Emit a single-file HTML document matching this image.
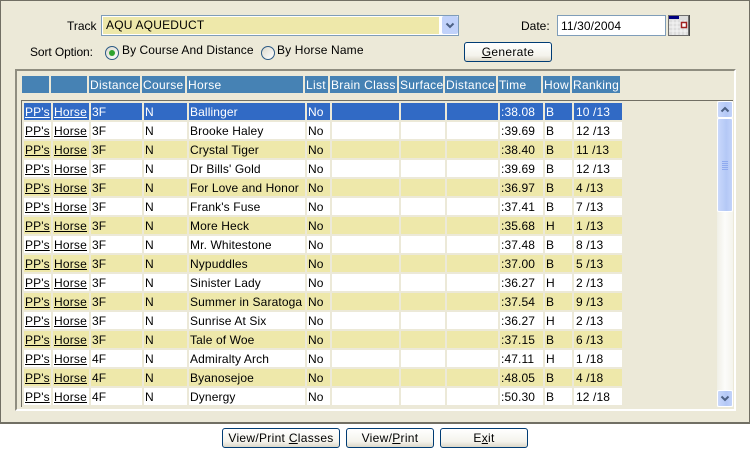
<!DOCTYPE html>
<html><head><meta charset="utf-8">
<style>
html,body{margin:0;padding:0;background:#fff}
#p{position:relative;width:750px;height:460px;overflow:hidden;background:#fff;font:12px "Liberation Sans",sans-serif;color:#000;letter-spacing:.1px}
.a{position:absolute;white-space:nowrap}
.panel{left:0;top:0;width:748px;height:421px;background:#ECE9D8;border:1px solid #716F64;border-width:1px 1px 2px 1px}
.r,.h{position:absolute;display:grid;grid-template-columns:27px 36px 51px 43px 116px 23px 67px 44px 51px 43px 27px 48px;column-gap:2px;height:17px;line-height:19px}
.r{left:24px;letter-spacing:.12px}
.h{left:22px;top:76px;color:#fff;letter-spacing:.3px}
.h div{background:#4682B4;padding-left:1px;overflow:hidden;white-space:nowrap}
.r div{background:#fff;padding-left:1px;overflow:hidden;white-space:nowrap}
.r div:nth-child(12){padding-left:2px}
.r div:nth-child(1),.r div:nth-child(2){text-decoration:underline}
.r div:nth-child(2){letter-spacing:.2px}
.y div{background:#EEE8AA}
.s div{background:#316AC5;color:#fff}
.btn{box-sizing:border-box;height:20px;border:1px solid #003C74;border-radius:3px;background:linear-gradient(#fff,#F4F3EC 70%,#DCD8C8);text-align:center;line-height:18px;letter-spacing:.3px}
.sb{background:linear-gradient(90deg,#C9D8FB,#B4C8F6 60%,#C2D2F9);border:1px solid #fff;box-sizing:border-box;border-radius:2px}
.radio{width:12px;height:12px;border:1px solid #2C5A85;border-radius:50%;background:linear-gradient(135deg,#DCD9CC,#fff)}
</style></head><body><div id="p">
<div class="a panel"></div>

<div class="a" style="left:67px;top:19px;letter-spacing:0">Track</div>
<div class="a" style="left:101px;top:15px;width:356px;height:19px;border:1px solid #7F9DB9;background:#fff;box-sizing:content-box"></div>
<div class="a" style="left:103px;top:17px;width:336px;height:17px;background:#EEE8AA;line-height:17px;padding-left:3px;box-sizing:border-box;letter-spacing:.2px">AQU AQUEDUCT</div>
<div class="a" style="left:442px;top:16px;width:16px;height:18px;background:#C1D2FA;border-radius:2px"></div>
<svg class="a" style="left:442px;top:16px" width="16" height="18"><path d="M4.5 7.5L8 11L11.500 7.500" fill="none" stroke="#4D6185" stroke-width="2"/></svg>

<div class="a" style="left:521px;top:19px;letter-spacing:0">Date:</div>
<div class="a" style="left:557px;top:15px;width:107px;height:19px;border:1px solid #7F9DB9;background:#fff;line-height:20px;text-indent:3px">11/30/2004</div>
<svg class="a" style="left:668px;top:15px" width="22" height="22">
<rect width="22" height="21" fill="#444"/><rect x="0" y="0" width="21" height="21" fill="#6E6E6E"/>
<rect x="1" y="1" width="19" height="19" fill="#DDD"/><rect x="1" y="1" width="10" height="3" fill="#000080"/>
<path d="M1 8H20M1 12H20M1 16H20M5 5V20M9 5V20M13 5V20M17 5V20" stroke="#F5F5F5"/>
<rect x="13.500" y="7.500" width="5" height="5" fill="#fff" stroke="#A02020" stroke-width="1.500"/>
</svg>

<div class="a" style="left:30px;top:45px;letter-spacing:-.1px">Sort Option:</div>
<div class="a radio" style="left:105px;top:46px"></div>
<div class="a" style="left:109px;top:50px;width:6px;height:6px;border-radius:50%;background:#2FA32F"></div>
<div class="a" style="left:122px;top:43px;letter-spacing:.07px">By Course And Distance</div>
<div class="a radio" style="left:261px;top:46px"></div>
<div class="a" style="left:277px;top:43px;letter-spacing:.15px">By Horse Name</div>
<div class="a btn" style="left:464px;top:42px;width:88px;line-height:18px"><u>G</u>enerate</div>

<div class="a" style="left:15px;top:69px;width:717px;height:338px;border:2px solid;border-color:#8F8D80 #fff #fff #8F8D80"></div>
<div class="a" style="left:21px;top:100px;width:712px;height:1px;background:#716F64"></div>
<div class="a" style="left:21px;top:100px;width:1px;height:307px;background:#716F64"></div>

<div class="h"><div></div><div></div><div>Distance</div><div>Course</div><div>Horse</div><div>List</div><div>Brain Class</div><div>Surface</div><div>Distance</div><div>Time</div><div>How</div><div>Ranking</div></div>

<div class="r s" style="top:103px"><div>PP's</div><div>Horse</div><div>3F</div><div>N</div><div>Ballinger</div><div>No</div><div></div><div></div><div></div><div>:38.08</div><div>B</div><div>10 /13</div></div>
<div class="r" style="top:122px"><div>PP's</div><div>Horse</div><div>3F</div><div>N</div><div>Brooke Haley</div><div>No</div><div></div><div></div><div></div><div>:39.69</div><div>B</div><div>12 /13</div></div>
<div class="r y" style="top:141px"><div>PP's</div><div>Horse</div><div>3F</div><div>N</div><div>Crystal Tiger</div><div>No</div><div></div><div></div><div></div><div>:38.40</div><div>B</div><div>11 /13</div></div>
<div class="r" style="top:160px"><div>PP's</div><div>Horse</div><div>3F</div><div>N</div><div>Dr Bills' Gold</div><div>No</div><div></div><div></div><div></div><div>:39.69</div><div>B</div><div>12 /13</div></div>
<div class="r y" style="top:179px"><div>PP's</div><div>Horse</div><div>3F</div><div>N</div><div>For Love and Honor</div><div>No</div><div></div><div></div><div></div><div>:36.97</div><div>B</div><div>4 /13</div></div>
<div class="r" style="top:198px"><div>PP's</div><div>Horse</div><div>3F</div><div>N</div><div>Frank's Fuse</div><div>No</div><div></div><div></div><div></div><div>:37.41</div><div>B</div><div>7 /13</div></div>
<div class="r y" style="top:217px"><div>PP's</div><div>Horse</div><div>3F</div><div>N</div><div>More Heck</div><div>No</div><div></div><div></div><div></div><div>:35.68</div><div>H</div><div>1 /13</div></div>
<div class="r" style="top:236px"><div>PP's</div><div>Horse</div><div>3F</div><div>N</div><div>Mr. Whitestone</div><div>No</div><div></div><div></div><div></div><div>:37.48</div><div>B</div><div>8 /13</div></div>
<div class="r y" style="top:255px"><div>PP's</div><div>Horse</div><div>3F</div><div>N</div><div>Nypuddles</div><div>No</div><div></div><div></div><div></div><div>:37.00</div><div>B</div><div>5 /13</div></div>
<div class="r" style="top:274px"><div>PP's</div><div>Horse</div><div>3F</div><div>N</div><div>Sinister Lady</div><div>No</div><div></div><div></div><div></div><div>:36.27</div><div>H</div><div>2 /13</div></div>
<div class="r y" style="top:293px"><div>PP's</div><div>Horse</div><div>3F</div><div>N</div><div>Summer in Saratoga</div><div>No</div><div></div><div></div><div></div><div>:37.54</div><div>B</div><div>9 /13</div></div>
<div class="r" style="top:312px"><div>PP's</div><div>Horse</div><div>3F</div><div>N</div><div>Sunrise At Six</div><div>No</div><div></div><div></div><div></div><div>:36.27</div><div>H</div><div>2 /13</div></div>
<div class="r y" style="top:331px"><div>PP's</div><div>Horse</div><div>3F</div><div>N</div><div>Tale of Woe</div><div>No</div><div></div><div></div><div></div><div>:37.15</div><div>B</div><div>6 /13</div></div>
<div class="r" style="top:350px"><div>PP's</div><div>Horse</div><div>4F</div><div>N</div><div>Admiralty Arch</div><div>No</div><div></div><div></div><div></div><div>:47.11</div><div>H</div><div>1 /18</div></div>
<div class="r y" style="top:369px"><div>PP's</div><div>Horse</div><div>4F</div><div>N</div><div>Byanosejoe</div><div>No</div><div></div><div></div><div></div><div>:48.05</div><div>B</div><div>4 /18</div></div>
<div class="r" style="top:388px"><div>PP's</div><div>Horse</div><div>4F</div><div>N</div><div>Dynergy</div><div>No</div><div></div><div></div><div></div><div>:50.30</div><div>B</div><div>12 /18</div></div>

<div class="a" style="left:717px;top:101px;width:16px;height:306px;background:linear-gradient(90deg,#F0EFE6,#FCFCFA 50%,#F4F3EC)"></div>
<div class="a sb" style="left:717px;top:101px;width:16px;height:17px"></div>
<svg class="a" style="left:717px;top:101px" width="16" height="17"><path d="M4.500 10.500L8 7L11.500 10.500" fill="none" stroke="#4D6185" stroke-width="2"/></svg>
<div class="a sb" style="left:717px;top:118px;width:16px;height:94px"></div>
<svg class="a" style="left:717px;top:118px" width="16" height="94"><path d="M5 43.500H11M5 45.500H11M5 47.500H11M5 49.500H11M5 51.500H11" stroke="#8FAAEF"/></svg>
<div class="a sb" style="left:717px;top:390px;width:16px;height:17px"></div>
<svg class="a" style="left:717px;top:390px" width="16" height="17"><path d="M4.500 6.500L8 10L11.500 6.500" fill="none" stroke="#4D6185" stroke-width="2"/></svg>

<div class="a btn" style="left:222px;top:428px;width:118px">View/Print <u>C</u>lasses</div>
<div class="a btn" style="left:346px;top:428px;width:88px">View/<u>P</u>rint</div>
<div class="a btn" style="left:440px;top:428px;width:88px">E<u>x</u>it</div>
</div></body></html>
